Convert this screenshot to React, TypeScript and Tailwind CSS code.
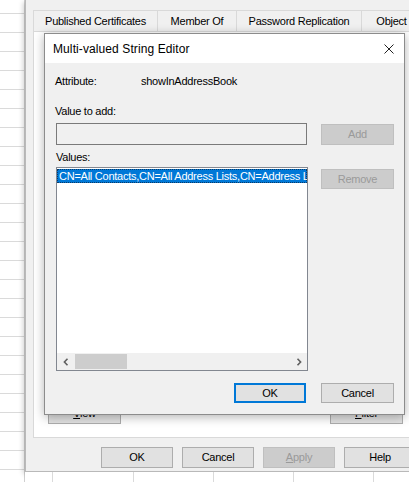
import type { ReactNode } from 'react'

const gridRows = Array.from({ length: 25 })
const stripCells = ['w-[28px]', 'w-[81px]', 'w-[80px]', 'w-[80px]', 'w-[80px]']

const tabs = [
  { label: 'Published Certificates', width: 'w-[124px]' },
  { label: 'Member Of', width: 'w-[79px]' },
  { label: 'Password Replication', width: 'w-[125px]' },
  { label: 'Object', width: 'w-[60px]' },
]

function Button({
  children,
  className = '',
  disabled = false,
  primary = false,
}: {
  children: ReactNode
  className?: string
  disabled?: boolean
  primary?: boolean
}) {
  const look = disabled
    ? 'bg-[#cccccc] border border-[#bfbfbf] text-[#9a9a9a]'
    : primary
      ? 'bg-[#e1e1e1] border-2 border-[#0078d7] text-black'
      : 'bg-[#e1e1e1] border border-[#adadad] text-black'
  return (
    <div className={`flex shrink-0 items-center justify-center ${look} ${className}`}>
      {children}
    </div>
  )
}

function Chevron({ left }: { left?: boolean }) {
  return (
    <svg width="6" height="8" viewBox="0 0 6 8" className="shrink-0">
      <path
        d={left ? 'M4.5 0.8 L1.4 4 L4.5 7.2' : 'M1.5 0.8 L4.6 4 L1.5 7.2'}
        fill="none"
        stroke="#606060"
        strokeWidth="1.6"
      />
    </svg>
  )
}

function StringEditorDialog() {
  return (
    <div className="absolute left-[44px] top-[33px] z-10 flex h-[382px] w-[361px] flex-col border border-[#8c8c8c] bg-[#f0f0f0] shadow-[0_2px_10px_rgba(0,0,0,0.3)]">
      <div className="flex h-[29px] shrink-0 items-center justify-between bg-white pl-[8px] pr-[10px]">
        <span className="text-[12px] leading-none tracking-[0.1px]">Multi-valued String Editor</span>
        <svg width="10" height="10" viewBox="0 0 10 10">
          <path d="M0.5 0.5 L9.5 9.5 M9.5 0.5 L0.5 9.5" stroke="#222" strokeWidth="1" />
        </svg>
      </div>

      <div className="flex flex-col pl-[11px] pr-[10px] pt-[11px]">
        <div className="flex h-[15px] items-center leading-[15px]">
          <span className="w-[86px] -ml-px">Attribute:</span>
          <span>showInAddressBook</span>
        </div>

        <div className="-ml-px mt-[15px] h-[15px] leading-[15px]">Value to add:</div>
        <div className="mt-[4px] flex items-start">
          <div className="h-[22px] w-[251px] border border-[#7a7a7a] bg-[#f0f0f0]" />
          <Button disabled className="ml-[14px] mt-px h-[21px] w-[73px]">Add</Button>
        </div>

        <div className="mt-[5px] h-[15px] leading-[15px]">Values:</div>
        <div className="mt-[2px] flex items-start">
          <div className="flex h-[204px] w-[252px] flex-col overflow-hidden border border-[#828790] bg-white">
            <div className="mt-px h-[14px] overflow-hidden whitespace-nowrap bg-[#0078d7] pl-[2px] leading-[14px] text-white outline-1 outline-dotted outline-[#0a3a66] -outline-offset-1">
              CN=All Contacts,CN=All Address Lists,CN=Address Lists Container
            </div>
            <div className="flex-1" />
            <div className="flex h-[17px] items-center bg-[#f0f0f0]">
              <div className="flex h-full w-[17px] items-center justify-center">
                <Chevron left />
              </div>
              <div className="ml-px h-[15px] w-[52px] bg-[#cdcdcd]" />
              <div className="flex-1" />
              <div className="flex h-full w-[17px] items-center justify-center">
                <Chevron />
              </div>
            </div>
          </div>
          <Button disabled className="ml-[13px] mt-[2px] h-[20px] w-[73px]">Remove</Button>
        </div>

        <div className="mt-[12px] flex justify-end gap-[15px]">
          <Button primary className="h-[20px] w-[72px]">OK</Button>
          <Button className="h-[20px] w-[73px]">Cancel</Button>
        </div>
      </div>
    </div>
  )
}

function PropertiesWindow() {
  return (
    <div className="flex h-[472px] flex-col border-b border-l border-[#b9b9b9] bg-[#f0f0f0] pl-[7px] pt-[10px] shadow-[-2px_2px_5px_rgba(0,0,0,0.18)]">
      <div className="flex h-[21px] shrink-0">
        {tabs.map((tab) => (
          <div
            key={tab.label}
            className={`${tab.width} flex shrink-0 items-center justify-center whitespace-nowrap border-l border-t border-[#d9d9d9]`}
          >
            {tab.label}
          </div>
        ))}
      </div>

      <div className="flex h-[407px] w-[400px] shrink-0 flex-col justify-end border border-[#d9d9d9] bg-white pb-[13px] pl-[14px]">
        <div className="flex w-[355px] justify-between">
          <Button className="h-[21px] w-[73px]"><span><u>V</u>iew</span></Button>
          <Button className="h-[21px] w-[73px]"><span><u>F</u>ilter</span></Button>
        </div>
      </div>

      <div className="mt-[9px] flex gap-[9px] pl-[68px]">
        <Button className="h-[21px] w-[72px]">OK</Button>
        <Button className="h-[21px] w-[72px]">Cancel</Button>
        <Button disabled className="h-[21px] w-[72px]"><span><u>A</u>pply</span></Button>
        <Button className="h-[21px] w-[72px]">Help</Button>
      </div>
    </div>
  )
}

export default function App() {
  return (
    <div className="relative flex h-[482px] w-[409px] overflow-hidden bg-white font-['Liberation_Sans',Arial,sans-serif] text-[11px] tracking-[-0.25px] text-black">
      <div className="flex w-[25px] shrink-0 flex-col border-r border-[#d0d0d0] pt-[13px]">
        {gridRows.map((_, i) => (
          <div key={i} className="h-[19px] shrink-0 border-t border-[#dadada]" />
        ))}
      </div>

      <div className="flex min-w-0 flex-1 flex-col">
        <PropertiesWindow />
        <div className="flex h-[10px] bg-white">
          {stripCells.map((w, i) => (
            <div key={i} className={`${w} shrink-0 border-r border-[#dadada]`} />
          ))}
        </div>
      </div>

      <StringEditorDialog />
    </div>
  )
}
